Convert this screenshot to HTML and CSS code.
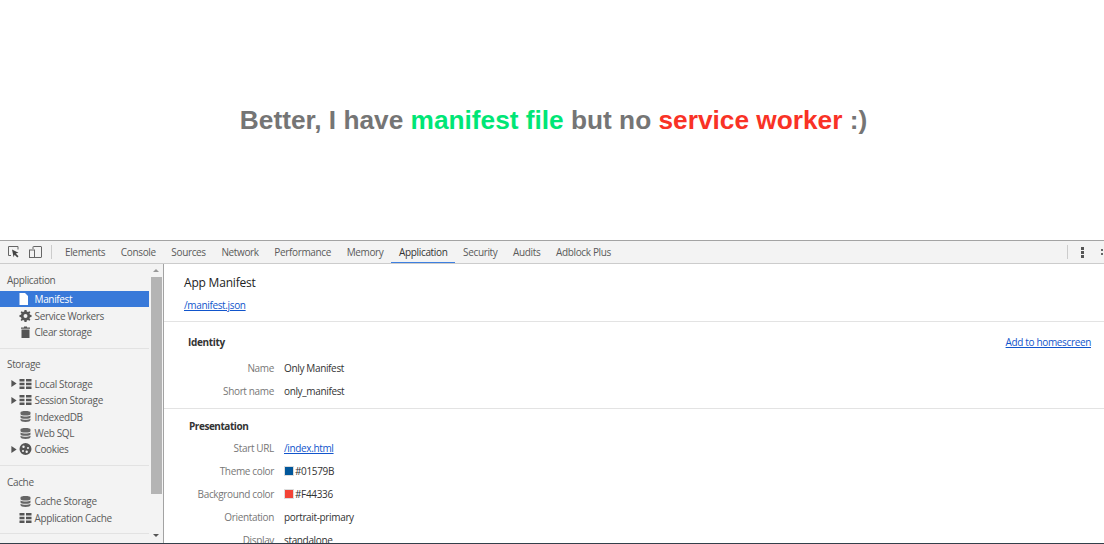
FILE: index.html
```html
<!DOCTYPE html>
<html lang="en">
<head>
<meta charset="utf-8">
<title>Only Manifest</title>
<link rel="stylesheet" href="styles.css">
</head>
<body>
<svg class="defs" width="0" height="0" aria-hidden="true">
  <symbol id="i-grid" viewBox="0 0 12 10"><path d="M0 0h5v2.500H0zM6.500 0H12v2.500H6.500zM0 3.700h5v2.600H0zM6.500 3.700H12v2.600H6.500zM0 7.500h5V10H0zM6.500 7.500H12V10H6.500z" fill="#555"/></symbol>
  <symbol id="i-db" viewBox="0 0 12 11"><path d="M1 1.500C1 .5 3 0 6 0s5 .5 5 1.500V3c0 1-2 1.500-5 1.500S1 4 1 3zM1 4.500c1 .8 3 1.100 5 1.100s4-.3 5-1.100v1.800c0 1-2 1.500-5 1.500s-5-.5-5-1.500zM1 7.700c1 .8 3 1.100 5 1.100s4-.3 5-1.100v1.400C11 10.300 9 11 6 11s-5-.7-5-1.900z" fill="#666"/></symbol>
  <symbol id="i-arrow" viewBox="0 0 6 8"><path d="M0 0l6 4-6 4z" fill="#555"/></symbol>
</svg>

<main class="page">
  <h1 class="headline">Better, I have <span class="green">manifest file</span> but no <span class="red">service worker</span> :)</h1>
</main>

<section class="devtools">
  <header class="toolbar">
    <svg class="tool-icon inspect" width="11" height="12" viewBox="0 0 11 12"><path d="M10 3.500V.5H.5v9H3" fill="none" stroke="#666"/><path d="M4 3.500l6.500 3.200-2.700.8 2.700 2.800-1.200 1.200-2.700-2.800-1 2.500z" fill="#444"/></svg>
    <svg class="tool-icon device" width="13" height="12" viewBox="0 0 13 12"><path d="M4 3V.9c0-.2.200-.4.400-.4h7.700c.2 0 .4.200.4.400v10.200c0 .2-.2.400-.4.400H6" fill="none" stroke="#666"/><rect x=".5" y="4" width="5" height="7.500" fill="none" stroke="#666"/></svg>
    <span class="sep"></span>
    <nav class="tabs">
      <span class="tab">Elements</span>
      <span class="tab">Console</span>
      <span class="tab">Sources</span>
      <span class="tab">Network</span>
      <span class="tab">Performance</span>
      <span class="tab">Memory</span>
      <span class="tab active">Application</span>
      <span class="tab">Security</span>
      <span class="tab">Audits</span>
      <span class="tab">Adblock Plus</span>
    </nav>
    <span class="tool-end">
      <span class="sep"></span>
      <svg class="dots" width="3" height="11" viewBox="0 0 3 11"><path d="M0 0h3v3H0zM0 4h3v3H0zM0 8h3v3H0z" fill="#555"/></svg>
      <svg class="dots close" width="2" height="11" viewBox="0 0 2 11"><path d="M0 2h2v2H0zM0 6h2v2H0z" fill="#666"/></svg>
    </span>
  </header>

  <div class="panes">
    <aside class="sidebar">
      <div class="side-scroll">
        <section class="group">
          <h2 class="group-title">Application</h2>
          <div class="item selected"><span class="twist"></span><svg class="ico" width="12" height="12" viewBox="0 0 12 12"><path d="M0 0h5.500L8.500 3v9H0z" fill="#fff"/></svg><span>Manifest</span></div>
          <div class="item"><span class="twist"></span><svg class="ico" width="12" height="12" viewBox="0 0 12 12"><path fill="#555" fill-rule="evenodd" d="M5 0h2l.3 1.600 1.200.5L9.900 1.200l1 1-.9 1.400.5 1.200 1.500.3v1.800l-1.500.3-.5 1.200.9 1.400-1 1-1.400-.9-1.200.5L7 12H5l-.3-1.500-1.200-.5-1.400.9-1-1 .9-1.400-.5-1.200L0 6.900V5.100l1.500-.3.5-1.200-.9-1.400 1-1 1.400.9 1.200-.5zM6 4a2 2 0 100 4 2 2 0 000-4z"/></svg><span>Service Workers</span></div>
          <div class="item"><span class="twist"></span><svg class="ico" width="12" height="12" viewBox="0 0 12 12"><path d="M1.500 1.500h3V.5h3v1h3v1.200h-9zM2 3.500h8V12H2z" fill="#555"/></svg><span>Clear storage</span></div>
        </section>
        <section class="group">
          <h2 class="group-title">Storage</h2>
          <div class="item"><svg class="twist" width="6" height="7"><use href="#i-arrow"/></svg><svg class="ico" width="12" height="10"><use href="#i-grid"/></svg><span>Local Storage</span></div>
          <div class="item"><svg class="twist" width="6" height="7"><use href="#i-arrow"/></svg><svg class="ico" width="12" height="10"><use href="#i-grid"/></svg><span>Session Storage</span></div>
          <div class="item"><span class="twist"></span><svg class="ico" width="12" height="11"><use href="#i-db"/></svg><span>IndexedDB</span></div>
          <div class="item"><span class="twist"></span><svg class="ico" width="12" height="11"><use href="#i-db"/></svg><span>Web SQL</span></div>
          <div class="item"><svg class="twist" width="6" height="7"><use href="#i-arrow"/></svg><svg class="ico" width="12" height="12" viewBox="0 0 12 12"><path fill="#555" fill-rule="evenodd" d="M6 0a6 6 0 100 12A6 6 0 006 0zM4 2.500a1.200 1.200 0 110 2.400 1.200 1.200 0 010-2.400zM8.500 4a1 1 0 110 2 1 1 0 010-2zM3.500 7a1 1 0 110 2 1 1 0 010-2zM7.200 7.500a1.200 1.200 0 110 2.400 1.200 1.200 0 010-2.400z"/></svg><span>Cookies</span></div>
        </section>
        <section class="group">
          <h2 class="group-title">Cache</h2>
          <div class="item"><span class="twist"></span><svg class="ico" width="12" height="11"><use href="#i-db"/></svg><span>Cache Storage</span></div>
          <div class="item"><span class="twist"></span><svg class="ico" width="12" height="10"><use href="#i-grid"/></svg><span>Application Cache</span></div>
        </section>
      </div>
      <div class="scrollbar">
        <span class="sb-up"></span>
        <span class="sb-thumb"></span>
        <span class="sb-down"></span>
      </div>
    </aside>

    <div class="content">
      <section class="report-head">
        <h2 class="report-title">App Manifest</h2>
        <a class="link" href="#">/manifest.json</a>
      </section>
      <section class="block identity">
        <div class="block-head">
          <h3 class="block-title">Identity</h3>
          <a class="link" href="#">Add to homescreen</a>
        </div>
        <div class="field"><span class="label">Name</span><span>Only Manifest</span></div>
        <div class="field"><span class="label">Short name</span><span>only_manifest</span></div>
      </section>
      <section class="block presentation">
        <div class="block-head"><h3 class="block-title">Presentation</h3></div>
        <div class="field"><span class="label">Start URL</span><a class="link" href="#">/index.html</a></div>
        <div class="field"><span class="label">Theme color</span><span class="swatch theme"></span><span>#01579B</span></div>
        <div class="field"><span class="label">Background color</span><span class="swatch bg"></span><span>#F44336</span></div>
        <div class="field"><span class="label">Orientation</span><span>portrait-primary</span></div>
        <div class="field"><span class="label">Display</span><span>standalone</span></div>
      </section>
    </div>
  </div>
</section>
</body>
</html>
```
FILE: styles.css
```css
html, body {
  margin: 0;
  height: 544px;
  overflow: hidden;
  background: #fff;
}
body {
  font-family: "Open Sans", "Noto Sans", sans-serif;
  display: flex;
  flex-direction: column;
  position: relative;
}
.defs { position: absolute; }
.page {
  height: 240px;
  flex: none;
  display: flex;
  justify-content: center;
  box-sizing: border-box;
  padding: 104px 0 0 3px;
}
.headline {
  margin: 0;
  font: bold 26.25px/32px "Liberation Sans", Arial, sans-serif;
  color: #757575;
}
.green { color: #00e676; }
.red { color: #f93226; }

.devtools {
  height: 304px;
  flex: none;
  box-sizing: border-box;
  border-top: 1px solid #a3a3a3;
  border-bottom: 1px solid #333f4a;
  display: flex;
  flex-direction: column;
  font-size: 10px;
  letter-spacing: -0.35px;
  color: #333;
}
.toolbar {
  flex: none;
  height: 22px;
  background: #f3f3f3;
  border-bottom: 1px solid #ccc;
  display: flex;
  align-items: center;
  white-space: nowrap;
}
.tool-icon { flex: none; }
.inspect { margin-left: 8px; }
.device { margin-left: 10px; }
.sep {
  width: 1px;
  height: 14px;
  background: #ccc;
  flex: none;
}
.toolbar > .sep { margin-left: 9px; }
.tabs {
  display: flex;
  height: 100%;
  margin-left: 5.200px;
}
.tab {
  padding: 0 7.800px;
  line-height: 23px;
  color: #5a5a5a;
  box-sizing: border-box;
}
.tab.active {
  color: #333;
  border-bottom: 1px solid #3d7fe0;
  height: 22px;
}
.tool-end {
  margin-left: auto;
  display: flex;
  align-items: center;
  gap: 13px;
  padding-right: 1px;
}
.close { margin-left: 4px; }

.panes {
  flex: 1;
  min-height: 0;
  display: flex;
}
.sidebar {
  flex: none;
  width: 163px;
  background: #f3f3f3;
  border-right: 1px solid #a3a3a3;
  display: flex;
  overflow: hidden;
  position: relative;
}
.side-scroll {
  width: 149px;
  flex: none;
}
.group {
  border-bottom: 1px solid #e2e2e2;
  padding: 6.500px 0 7.500px;
}
.group + .group { padding-top: 6.500px; }
.group-title {
  margin: 0;
  font-weight: 400;
  font-size: 10px;
  line-height: 19px;
  padding-left: 7px;
  color: #5a5a5a;
  height: 20.500px;
}
.item {
  height: 16.400px;
  display: flex;
  align-items: center;
  color: #5a5a5a;
  white-space: nowrap;
}
.item.selected {
  background: #3879d9;
  color: #fff;
}
.twist {
  width: 6px;
  flex: none;
  margin-left: 10.500px;
  margin-right: 2px;
}
.ico {
  flex: none;
  margin-right: 3px;
  width: 13px;
}
.scrollbar {
  flex: 1;
  position: relative;
  border-left: 2px solid #f3f3f3;
  display: flex;
  flex-direction: column;
  align-items: stretch;
}
.sb-up, .sb-down {
  height: 13px;
  flex: none;
  position: relative;
}
.sb-up::before, .sb-down::before {
  content: "";
  position: absolute;
  left: 2px;
  top: 5px;
  border-left: 3px solid transparent;
  border-right: 3px solid transparent;
}
.sb-up::before { border-bottom: 3px solid #999; }
.sb-down::before { border-top: 3px solid #555; top: 4px; }
.sb-thumb {
  height: 217px;
  flex: none;
  background: #b4b4b4;
  margin-right: 1px;
}
.sb-down { margin-top: auto; }

.content {
  flex: 1;
  min-width: 0;
  overflow: hidden;
  color: #333;
}
.report-head {
  height: 58px;
  box-sizing: border-box;
  padding: 9px 0 0 20px;
  border-bottom: 1px solid #e3e3e3;
}
.report-title {
  margin: 0 0 5px;
  font-weight: 400;
  font-size: 12px;
  letter-spacing: -0.2px;
  line-height: 20px;
  color: #222;
}
.link {
  color: #1155cc;
  text-decoration: underline;
  display: inline-block;
  line-height: 14px;
}
.block {
  border-bottom: 1px solid #e3e3e3;
  padding: 0 13px 0 24px;
}
.identity { height: 87px; box-sizing: border-box; padding-top: 12px; }
.presentation { border-bottom: 0; padding-top: 9px; }
.block-head {
  display: flex;
  justify-content: space-between;
  align-items: center;
  height: 16px;
  margin-bottom: 6px;
}
.presentation .block-head { margin-bottom: 2px; }
.presentation .block-title { margin-left: 1px; letter-spacing: -0.45px; }
.block-title {
  margin: 0;
  font-size: 10px;
  font-weight: 700;
  color: #333;
}
.field {
  display: flex;
  align-items: center;
  height: 23px;
  white-space: nowrap;
}
.label {
  width: 86px;
  flex: none;
  margin-right: 10px;
  margin-left: -24px;
  padding-left: 24px;
  text-align: right;
  color: #777;
}
.swatch {
  width: 8px;
  height: 8px;
  flex: none;
  margin-right: 1px;
  border: 1px solid #ddd;
}
.theme { background: #01579b; }
.bg { background: #f44336; }
```
